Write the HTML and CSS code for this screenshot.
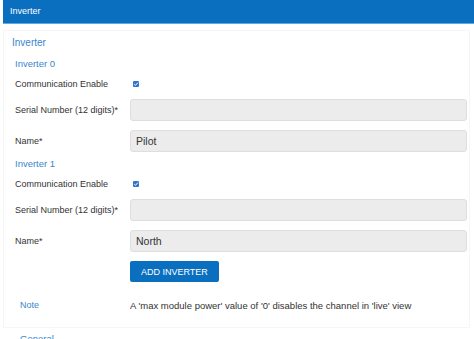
FILE: index.html
```html
<!DOCTYPE html>
<html lang="en">
  <head>
    <meta charset="UTF-8" />
    <meta name="viewport" content="width=device-width, initial-scale=1.0" />
    <title>Inverter</title>
    <link rel="stylesheet" href="styles.css">
  </head>
  <body>
    <div class="topbar">Inverter</div>
    <div class="panel">
      <div class="legend">Inverter</div>

      <div class="block">
        <div class="heading">Inverter 0</div>
        <div class="row check-row">
          <span class="label">Communication Enable</span>
          <span class="check">
            <svg viewBox="0 0 6 6" width="6" height="6"><path d="M1.2 3.1 L2.5 4.3 L4.9 1.6" fill="none" stroke="#fff" stroke-width="1"/></svg>
          </span>
        </div>
        <div class="row field serial">
          <span class="label">Serial Number (12 digits)*</span>
          <div class="input"></div>
        </div>
        <div class="row field">
          <span class="label">Name*</span>
          <div class="input">Pilot</div>
        </div>
      </div>

      <div class="block">
        <div class="heading">Inverter 1</div>
        <div class="row check-row">
          <span class="label">Communication Enable</span>
          <span class="check">
            <svg viewBox="0 0 6 6" width="6" height="6"><path d="M1.2 3.1 L2.5 4.3 L4.9 1.6" fill="none" stroke="#fff" stroke-width="1"/></svg>
          </span>
        </div>
        <div class="row field serial">
          <span class="label">Serial Number (12 digits)*</span>
          <div class="input"></div>
        </div>
        <div class="row field">
          <span class="label">Name*</span>
          <div class="input">North</div>
        </div>
      </div>

      <div class="row actions">
        <span class="label"></span>
        <button type="button" class="add">ADD INVERTER</button>
      </div>

      <div class="row note">
        <span class="label note-label">Note</span>
        <span class="note-text">A 'max module power' value of '0' disables the channel in 'live' view</span>
      </div>
    </div>
    <div class="next-legend">General</div>
  </body>
</html>
```

FILE: styles.css
```css
body {
  margin: 0;
  font-family: "Liberation Sans", Arial, sans-serif;
  font-size: 9px;
  color: #333;
  background-color: #fff;
  overflow: hidden;
}
.topbar {
  margin-left: 3px;
  height: 23px;
  line-height: 23px;
  padding-left: 7px;
  background-color: #0b6fc0;
  border-bottom: 1px solid #5fa8e4;
  color: #fff;
  font-size: 9px;
}
.panel {
  margin: 6px 4px 0 3px;
  border: 1px solid #f6f6f6;
  padding-bottom: 12px;
}
.legend {
  height: 20px;
  line-height: 20px;
  margin-top: 2px;
  padding-left: 8px;
  color: #3a86cc;
  font-size: 10px;
}
.block {
  padding-left: 11px;
  padding-right: 2px;
}
.heading {
  height: 20px;
  line-height: 20px;
  color: #3a86cc;
  font-size: 9.5px;
  margin-top: 1px;
}
.block + .block .heading {
  margin-top: 2px;
}
.row {
  display: flex;
  align-items: center;
}
.label {
  width: 115px;
  flex-shrink: 0;
}
.check-row {
  height: 20px;
}
.check {
  width: 6px;
  height: 6px;
  margin-left: 3px;
  background-color: #2f74cf;
  border-radius: 1px;
  display: flex;
}
.field {
  height: 22px;
  margin-top: 9px;
}
.field.serial {
  margin-top: 5px;
}
.input {
  flex: 1;
  height: 20px;
  line-height: 20px;
  padding-left: 5px;
  background-color: #ececec;
  border: 1px solid #dedede;
  border-radius: 3px;
  font-size: 10.5px;
  color: #333;
}
.actions {
  margin-top: 9px;
  padding-left: 11px;
}
.add {
  height: 21px;
  padding: 0 11px;
  border: none;
  border-radius: 2px;
  background-color: #0b6fc0;
  color: #fff;
  font-family: "Liberation Sans", Arial, sans-serif;
  font-size: 9px;
}
.note {
  margin-top: 13px;
  height: 20px;
  padding-left: 16px;
}
.note-label {
  width: 110px;
  color: #3a86cc;
}
.note-text {
  font-size: 9.5px;
}
.next-legend {
  margin-top: 5px;
  padding-left: 20px;
  color: #3a86cc;
  font-size: 9.5px;
}
```
